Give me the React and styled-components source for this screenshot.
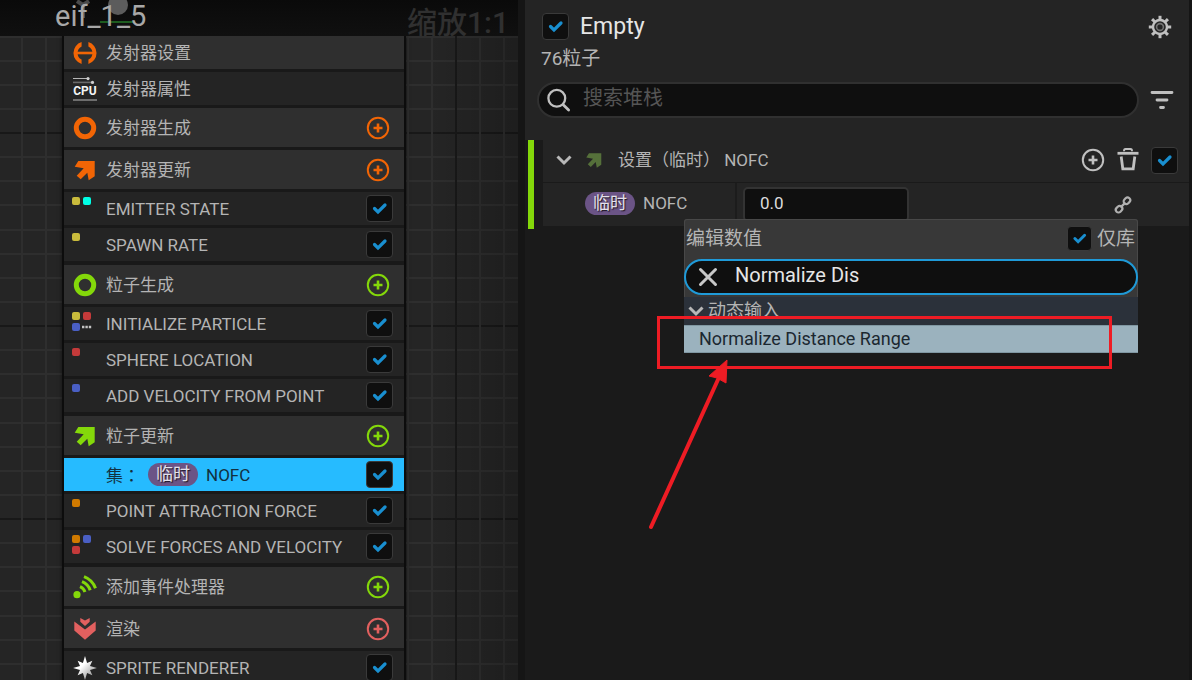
import { useState } from "react"
import styled, { createGlobalStyle, css } from "styled-components"

const orange = "#f26505"
const green = "#84d80a"
const red = "#e2605f"
const yellow = "#c9bb3c"
const cyan = "#00ffe6"
const crimson = "#c43a3a"
const blue = "#4a5fc4"
const amber = "#d07a00"

// one entry per block of the emitter node, in stack order
const sections = [
    { title: "发射器生成", icon: "ring", color: orange, modules: [] },
    {
        title: "发射器更新", icon: "arrow", color: orange, modules: [
            { name: "EMITTER STATE", dots: [yellow, cyan] },
            { name: "SPAWN RATE", dots: [yellow] },
        ]
    },
    {
        title: "粒子生成", icon: "ring", color: green, modules: [
            { name: "INITIALIZE PARTICLE", dots: [yellow, crimson, blue], more: true },
            { name: "SPHERE LOCATION", dots: [crimson] },
            { name: "ADD VELOCITY FROM POINT", dots: [blue] },
        ]
    },
    {
        title: "粒子更新", icon: "arrow", color: green, modules: [
            { name: "NOFC", selected: true },
            { name: "POINT ATTRACTION FORCE", dots: [amber] },
            { name: "SOLVE FORCES AND VELOCITY", dots: [amber, blue, crimson] },
        ]
    },
    { title: "添加事件处理器", icon: "event", color: green, modules: [] },
    {
        title: "渲染", icon: "render", color: red, modules: [
            { name: "SPRITE RENDERER", star: true },
        ]
    },
]

export default function App() {
    return (
        <>
            <GlobalStyle />
            <Editor>
                <Graph>
                    <GraphHeader>
                        <HeaderGhost />
                        <GraphTitle>eif_1_5</GraphTitle>
                        <ZoomLevel>缩放1:1</ZoomLevel>
                    </GraphHeader>
                    <EmitterNode />
                </Graph>
                <Splitter />
                <Inspector />
            </Editor>
        </>
    )
}

function EmitterNode() {
    return (
        <Node>
            <Row>
                <IconSlot><SettingsIcon /></IconSlot>
                <RowLabel>发射器设置</RowLabel>
            </Row>
            <Row $dark>
                <IconSlot><CpuIcon /></IconSlot>
                <RowLabel>发射器属性</RowLabel>
            </Row>
            {sections.map((section) => (
                <Section key={section.title} $filled={section.modules.length > 0}>
                    <Row $group>
                        <IconSlot><GroupIcon name={section.icon} color={section.color} /></IconSlot>
                        <RowLabel>{section.title}</RowLabel>
                        <Slot>
                            <IconButton type="button" aria-label={section.title} $color={section.color}>
                                <PlusIcon />
                            </IconButton>
                        </Slot>
                    </Row>
                    {section.modules.map((module) => <ModuleRow key={module.name} module={module} />)}
                </Section>
            ))}
        </Node>
    )
}

function ModuleRow({ module }) {
    return (
        <Row $dark $selected={module.selected}>
            <IconSlot>
                {module.dots && <Dots colors={module.dots} more={module.more} />}
                {module.star && <StarIcon />}
            </IconSlot>
            <RowLabel>
                {module.selected && <><SetLabel>集：</SetLabel><Badge>临时</Badge></>}
                {module.name}
            </RowLabel>
            <Slot><Check label={module.name} /></Slot>
        </Row>
    )
}

function Inspector() {
    const [search, setSearch] = useState("")
    const [value, setValue] = useState("0.0")

    return (
        <Panel>
            <PanelHead>
                <TitleRow>
                    <Check label="Empty" />
                    <h1>Empty</h1>
                    <IconButton type="button" aria-label="设置" $color="#c0c0c0"><GearIcon /></IconButton>
                </TitleRow>
                <Count>76粒子</Count>
                <SearchRow>
                    <SearchBox>
                        <SearchIcon />
                        <input type="text" aria-label="搜索堆栈" placeholder="搜索堆栈"
                            value={search} onChange={(e) => setSearch(e.target.value)} />
                    </SearchBox>
                    <IconButton type="button" aria-label="筛选" $color="#c0c0c0"><FilterIcon /></IconButton>
                </SearchRow>
            </PanelHead>
            <Stack>
                <StackBar />
                <StackRows>
                    <StackHead>
                        <ChevronIcon size={18} />
                        <DimArrow><GroupIcon name="arrow" color="#55703a" size={18} /></DimArrow>
                        <h2>设置（临时） NOFC</h2>
                        <StackActions>
                            <IconButton type="button" aria-label="添加" $color="#c0c0c0"><PlusIcon /></IconButton>
                            <IconButton type="button" aria-label="删除" $color="#c0c0c0"><TrashIcon /></IconButton>
                            <Check label="设置（临时） NOFC" />
                        </StackActions>
                    </StackHead>
                    <ValueRow>
                        <ValueLabel htmlFor="nofc"><Badge>临时</Badge>NOFC</ValueLabel>
                        <ValueInput id="nofc" type="text" value={value} onChange={(e) => setValue(e.target.value)} />
                        <IconButton type="button" aria-label="编辑数值" $color="#b0b0b0"><LinkIcon /></IconButton>
                        <ValueMenu />
                    </ValueRow>
                </StackRows>
            </Stack>
        </Panel>
    )
}

function ValueMenu() {
    const [query, setQuery] = useState("Normalize Dis")

    return (
        <Menu>
            <MenuHead>
                <span>编辑数值</span>
                <label htmlFor="library-only"><Check id="library-only" small />仅库</label>
            </MenuHead>
            <SearchBox $active>
                <IconButton type="button" aria-label="清除" $color="#c8c8c8" onClick={() => setQuery("")}>
                    <CloseIcon />
                </IconButton>
                <input type="text" aria-label="编辑数值" value={query} onChange={(e) => setQuery(e.target.value)} />
            </SearchBox>
            <Category><ChevronIcon size={18} />动态输入</Category>
            <MenuItem type="button">Normalize Distance Range</MenuItem>
            <Highlight />
            <Pointer viewBox="0 0 90 180">
                <path d="M9 168 L79 14" stroke="#ee1c24" strokeWidth="4" strokeLinecap="round" />
                <path d="M85 1 L67 17 L75 19 L84 24 Z" fill="#ee1c24" stroke="#ee1c24" strokeWidth="1" />
            </Pointer>
        </Menu>
    )
}

function Check({ label, id, small }) {
    const [checked, setChecked] = useState(true)
    return (
        <CheckBox $small={small}>
            <input id={id} type="checkbox" aria-label={label} checked={checked}
                onChange={(e) => setChecked(e.target.checked)} />
            {checked && (
                <svg viewBox="0 0 27 27" fill="none">
                    <path d="M8.5 13.5 L12 17 L19 10" stroke="#198fd0" strokeWidth="3.2" strokeLinecap="round" />
                </svg>
            )}
        </CheckBox>
    )
}

/* icons */

function GroupIcon({ name, color, size = 24 }) {
    return (
        <svg width={size} height={size} viewBox="0 0 24 24" fill="none">
            {name === "ring" && <circle cx="12" cy="12" r="8.7" stroke={color} strokeWidth="5" />}
            {name === "arrow" && (
                <path fill={color} d="M5.3 3 H21.7 V18.3 L15.7 22.3 L14.3 14.7 L7.7 21.3 L3.7 17.7 L10.7 10.3 L1.7 8.7 Z" />
            )}
            {name === "event" && (
                <>
                    <circle cx="4" cy="19.7" r="3.6" fill={color} />
                    <path stroke={color} strokeWidth="3"
                        d="M7 11.7 A8.5 8.5 0 0 1 12 17 M9 6.6 A14 14 0 0 1 17.2 15.2 M11 1.6 A19.6 19.6 0 0 1 22.5 13.3" />
                </>
            )}
            {name === "render" && (
                <path fill={color} d="M1.3 4.6 L12 12.4 L22.7 4.6 V13.6 L12 22.8 L1.3 13.6 Z M7.3 1 L12 3.6 L16.7 1 V4.8 L12 9 L7.3 4.8 Z" />
            )}
        </svg>
    )
}

function SettingsIcon() {
    return (
        <svg width="24" height="24" viewBox="0 0 24 24" fill={orange}>
            <path d="M8.6 1 A11.5 11.5 0 0 0 8.6 23 V18.6 A7.4 7.4 0 0 1 8.6 5.4 Z" />
            <path d="M15.4 1 A11.5 11.5 0 0 1 15.4 23 V18.6 A7.4 7.4 0 0 0 15.4 5.4 Z" />
            <path d="M3.5 10.7 H20.5 V13.3 H3.5 Z" />
        </svg>
    )
}

function CpuIcon() {
    return (
        <svg width="24" height="24" viewBox="0 0 24 24">
            <path d="M0 1.5 H16 M0 23 H24" stroke="#b8b8b8" strokeWidth="1.2" />
            <path d="M0 5.4 H19" stroke="#6a6a6a" strokeWidth="1.6" />
            <circle cx="15" cy="1.6" r="1.6" fill="#d0d0d0" />
            <circle cx="19.5" cy="5.4" r="1.6" fill="#d0d0d0" />
            <text x="12" y="18.4" textAnchor="middle" fontSize="12" fontWeight="700" fill="#f4f4f4">CPU</text>
        </svg>
    )
}

function Dots({ colors, more }) {
    return (
        <DotsSvg width="20" height="24" viewBox="0 0 20 24">
            {colors.map((color, i) => (
                <rect key={i} x={(i % 2) * 11} y={Math.floor(i / 2) * 11} width="8" height="8" rx="2" fill={color} />
            ))}
            {more && <path d="M10 15 h2.4 M13.4 15 h2.4 M16.8 15 h2.4" stroke="#c4c4c4" strokeWidth="2.4" />}
        </DotsSvg>
    )
}

function StarIcon() {
    const points = Array.from({ length: 16 }, (_, i) => {
        const radius = i % 2 ? 5.4 : i % 4 ? 10.4 : 11.9
        const angle = (i * Math.PI) / 8
        return `${12 + radius * Math.sin(angle)},${12 - radius * Math.cos(angle)}`
    })
    return (
        <svg width="24" height="24" viewBox="0 0 24 24">
            <defs>
                <linearGradient id="star" x1="0" y1="0" x2="1" y2="1">
                    <stop offset="0.4" stopColor="#ffffff" />
                    <stop offset="0.9" stopColor="#8c8c8c" />
                </linearGradient>
            </defs>
            <polygon points={points.join(" ")} fill="url(#star)" />
        </svg>
    )
}

function PlusIcon() {
    return (
        <svg width="24" height="24" viewBox="0 0 24 24" fill="none" stroke="currentColor">
            <circle cx="12" cy="12" r="10.2" strokeWidth="2" />
            <path d="M12 7.5 V16.5 M7.5 12 H16.5" strokeWidth="2.6" />
        </svg>
    )
}

function GearIcon() {
    return (
        <svg width="24" height="24" viewBox="0 0 24 24" fill="none" stroke="currentColor">
            <circle cx="12" cy="12" r="7" strokeWidth="2.4" />
            <circle cx="12" cy="12" r="3.4" strokeWidth="1.6" opacity="0.5" />
            {[0, 45, 90, 135, 180, 225, 270, 315].map((deg) => (
                <path key={deg} d="M12 5 V0.8" strokeWidth="3" transform={`rotate(${deg} 12 12)`} />
            ))}
        </svg>
    )
}

function FilterIcon() {
    return (
        <svg width="24" height="24" viewBox="0 0 24 24" stroke="currentColor" strokeWidth="2.8" strokeLinecap="round">
            <path d="M2 4.5 H22 M7 12 H17 M10.5 19.5 H13.5" />
        </svg>
    )
}

function TrashIcon() {
    return (
        <svg width="24" height="24" viewBox="0 0 24 24" fill="none" stroke="currentColor" strokeWidth="2.8">
            <path d="M1.5 5.3 H22.5" />
            <path d="M8 3.3 Q8 1 9.5 1 H14.5 Q16 1 16 3.3" strokeWidth="2" />
            <path d="M5.2 8.5 L6.8 20.8 H17.2 L18.8 8.5" />
        </svg>
    )
}

function LinkIcon() {
    return (
        <svg width="20" height="20" viewBox="0 0 20 20" fill="none" stroke="currentColor" strokeWidth="2.2">
            <rect x="10.4" y="3" width="7" height="5.4" rx="2.7" transform="rotate(-45 14 5.7)" />
            <rect x="2.6" y="11.6" width="7" height="5.4" rx="2.7" transform="rotate(-45 6 14.3)" />
            <path d="M7.6 12.4 L12.4 7.6" />
        </svg>
    )
}

function SearchIcon() {
    return (
        <svg width="24" height="24" viewBox="0 0 24 24" fill="none" stroke="#c0c0c0" strokeLinecap="round">
            <circle cx="9.8" cy="10.3" r="8.4" strokeWidth="2.3" />
            <path d="M16.2 16.8 L21.6 22" strokeWidth="2.8" />
        </svg>
    )
}

function CloseIcon() {
    return (
        <svg width="24" height="24" viewBox="0 0 24 24" stroke="currentColor" strokeWidth="3" strokeLinecap="round">
            <path d="M4.5 4.5 L19.5 19.5 M19.5 4.5 L4.5 19.5" />
        </svg>
    )
}

function ChevronIcon({ size }) {
    return (
        <svg width={size} height={size} viewBox="0 0 18 18" fill="none">
            <path d="M2.5 5.5 L9 12 L15.5 5.5" stroke="#b8b8b8" strokeWidth="3" />
        </svg>
    )
}

function HeaderGhost() {
    return (
        <Ghost width="60" height="26" viewBox="0 0 60 26">
            <path d="M2 1 L8 5 L14 1 M8 4 V18" stroke="#4a4a4a" strokeWidth="4" fill="none" />
            <circle cx="43" cy="5" r="10" fill="#5c5c5c" />
            <rect x="25" y="21" width="36" height="2" fill="#1d5c1f" />
        </Ghost>
    )
}

/* styles */

const GlobalStyle = createGlobalStyle`
    *{
        box-sizing: border-box;
    }
    body{
        margin: 0;
        background: #1a1a1a;
        color: #b4b4b4;
        font-family: Roboto, "Noto Sans CJK SC", sans-serif;
        font-size: 17px;
    }
    svg{
        display: block;
        flex: none;
    }
    input, button{
        font: inherit;
        color: inherit;
    }
`

const Editor = styled.main`
    display: grid;
    grid-template-columns: minmax(406px, 518fr) 7px minmax(0, 667fr);
    height: 100vh;
    overflow: hidden;
`

// eight cells of the canvas grid, the first line being the heavy one
const gridLines = (direction) => `linear-gradient(${direction}, #181818 0 2px, ${[24, 48, 72, 97, 121, 145, 169]
    .map((at) => `transparent 0 ${at}px, #2e2e2e 0 ${at + 2}px`).join(", ")}, transparent 0)`

const Graph = styled.section`
    display: flex;
    flex-direction: column;
    min-width: 0;
    overflow: hidden;
    background-color: #252525;
    background-image: linear-gradient(to left, rgba(0,0,0,0.2), transparent 90px), ${gridLines("to right")}, ${gridLines("to bottom")};
    background-size: auto, 193px 193px, 193px 193px;
    background-position: 0 0, 69px 132px, 69px 132px;
`

const GraphHeader = styled.header`
    position: relative;
    display: flex;
    flex: none;
    align-items: center;
    justify-content: space-between;
    height: 36px;
    padding: 0 9px 4px 55px;
    background: linear-gradient(#0a0a0a, #101010);
    line-height: 32px;
`

const Ghost = styled.svg`
    position: absolute;
    left: 75px;
    top: 0;
`

const GraphTitle = styled.h2`
    position: relative;
    margin: 0;
    font-size: 29px;
    font-weight: 400;
    color: #a8a8a8;
`

const ZoomLevel = styled.span`
    padding-top: 14px;
    font-size: 30px;
    font-weight: 500;
    color: #303030;
`

const Node = styled.div`
    flex: none;
    width: 344px;
    margin-left: 62px;
    border: solid #0c0c0c;
    border-width: 0 2px;
    background: #191919;
    box-shadow: 0 0 4px rgba(0,0,0,0.5);
`

const Section = styled.div`
    padding-bottom: ${(p) => (p.$filled ? 1 : 0)}px;
`

const Row = styled.div`
    display: flex;
    align-items: center;
    height: ${(p) => (p.$group ? 39 : 33)}px;
    margin-bottom: 3px;
    padding-right: 11px;
    background: ${(p) => (p.$selected ? "#26bbff" : p.$dark ? "#242424" : "#2f2f2f")};
    color: ${(p) => (p.$selected ? "#12303f" : "#b4b4b4")};
`

const IconSlot = styled.div`
    display: flex;
    flex: none;
    justify-content: center;
    width: 42px;
`

const DotsSvg = styled.svg`
    margin-right: 6px;
`

const RowLabel = styled.div`
    display: flex;
    flex: 1;
    align-items: center;
    line-height: 24px;
    white-space: nowrap;
`

const SetLabel = styled.span`
    margin-right: 8px;
    font-family: "Noto Sans CJK TC", sans-serif;
`

const Badge = styled.span`
    margin-right: 8px;
    padding: 0 8px;
    border-radius: 12px;
    background: #6b5486;
    color: #e4e0ea;
    line-height: 23px;
    text-shadow: 1px 1px 1px #1c1424;
`

const Slot = styled.div`
    width: 27px;
`

const IconButton = styled.button`
    display: block;
    flex: none;
    padding: 0;
    border: none;
    background: none;
    color: ${(p) => p.$color};
    cursor: pointer;
`

const CheckBox = styled.span`
    display: grid;
    flex: none;
    width: ${(p) => (p.$small ? 25 : 27)}px;
    height: ${(p) => (p.$small ? 25 : 27)}px;
    input, svg{
        grid-area: 1 / 1;
        width: 100%;
        height: 100%;
        margin: 0;
    }
    input{
        appearance: none;
        border: 1px solid #3a3a3a;
        border-radius: 4px;
        background: #0f0f0f;
    }
    svg{
        pointer-events: none;
    }
`

const Splitter = styled.div`
    background: #151515;
`

const Panel = styled.section`
    min-width: 0;
    border-right: 3px solid #151515;
    background: #1a1a1a;
`

const PanelHead = styled.header`
    height: 140px;
    padding: 13px 17px 0;
    background: #242424;
`

const TitleRow = styled.div`
    display: flex;
    align-items: center;
    gap: 11px;
    h1{
        flex: 1;
        margin: 0;
        font-size: 23px;
        font-weight: 400;
        line-height: 27px;
        color: #e6e6e6;
    }
`

const Count = styled.p`
    margin: 5px 0 9px -1px;
    font-size: 19px;
    line-height: 28px;
`

const SearchRow = styled.div`
    display: flex;
    align-items: center;
    gap: 11px;
    margin-left: -5px;
    margin-right: -2px;
`

const SearchBox = styled.div`
    display: flex;
    flex: 1;
    align-items: center;
    gap: 12px;
    height: 36px;
    padding: 0 8px;
    border: 2px solid #303030;
    border-radius: 18px;
    background: #0f0f0f;
    input{
        flex: 1;
        min-width: 0;
        height: 32px;
        padding: 0 0 4px;
        border: none;
        outline: none;
        background: none;
        font-size: 20px;
        color: #e6e6e6;
    }
    input::placeholder{
        color: #555;
        opacity: 1;
    }
    ${(p) => p.$active && css`
        flex: none;
        gap: 15px;
        padding: 0 10px;
        border-color: #1f9ad8;
    `}
`

const Stack = styled.div`
    display: flex;
    padding-left: 3px;
`

const StackBar = styled.div`
    width: 6px;
    height: 89px;
    background: ${green};
`

const StackRows = styled.div`
    flex: 1;
    min-width: 0;
    margin-left: 9px;
`

const StackHead = styled.div`
    display: flex;
    align-items: center;
    gap: 12px;
    height: 42px;
    padding: 0 11px 2px 12px;
    background: #242424;
    h2{
        flex: 1;
        margin: 0;
        font-size: 17px;
        font-weight: 400;
        line-height: 24px;
    }
`

const StackActions = styled.div`
    display: flex;
    align-items: center;
    gap: 11px;
`

const DimArrow = styled.span`
    margin-right: 3px;
`

const ValueRow = styled.div`
    position: relative;
    display: flex;
    align-items: center;
    height: 43px;
    margin-top: 1px;
    padding-right: 56px;
    background: #242424;
`

const ValueLabel = styled.label`
    display: flex;
    align-items: center;
    align-self: stretch;
    width: 194px;
    padding: 0 0 3px 42px;
    border-right: 2px solid #1c1c1c;
`

const ValueInput = styled.input`
    width: 166px;
    height: 35px;
    margin: 0 auto 0 6px;
    padding: 0 15px 4px;
    border: 2px solid #333;
    border-radius: 5px;
    outline: none;
    background: #0f0f0f;
    && {
        color: #dcdcdc;
    }
`

const Menu = styled.div`
    position: absolute;
    top: 36px;
    left: 141px;
    right: 51px;
    border-radius: 3px 3px 0 0;
    background: #383838;
    box-shadow: inset 0 0 0 1px #484848;
`

const MenuHead = styled.div`
    display: flex;
    align-items: center;
    justify-content: space-between;
    height: 40px;
    padding: 0 3px 1px 2px;
    font-size: 19px;
    line-height: 28px;
    label{
        display: flex;
        align-items: center;
        gap: 5px;
    }
`

const Category = styled.div`
    display: flex;
    align-items: center;
    gap: 3px;
    height: 28px;
    margin-top: 2px;
    padding-left: 3px;
    background: #2b313a;
    font-size: 18px;
    line-height: 28px;
`

const MenuItem = styled.button`
    display: block;
    width: 100%;
    height: 28px;
    padding: 0 15px;
    border: solid #8097a2;
    border-width: 1px 0;
    background: #9bb2be;
    text-align: left;
    line-height: 24px;
    && {
        color: #1b2730;
        font-size: 18px;
    }
`

const Highlight = styled.div`
    position: absolute;
    top: 97px;
    left: -27px;
    right: 26px;
    height: 53px;
    border: 3px solid #ee1c24;
`

const Pointer = styled.svg`
    position: absolute;
    top: 140px;
    left: -42px;
    width: 90px;
    height: 180px;
    fill: none;
`
